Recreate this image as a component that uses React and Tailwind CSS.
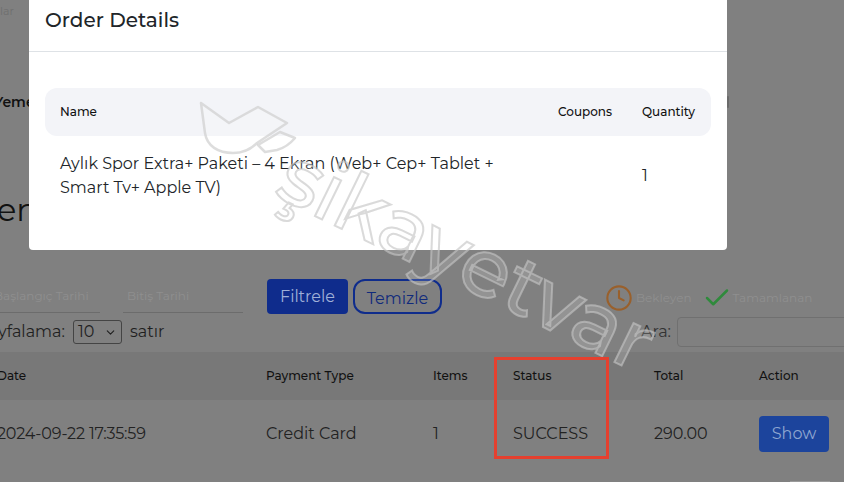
import { Check, Clock, ChevronDown } from 'lucide-react';

const font = "font-['Montserrat','Inter','Noto_Sans',sans-serif]";

const Background = () => (
  <div className="h-[482px] overflow-hidden bg-[#808080] text-[#1f1f1f]">
    <div className="h-[262px]">
      <div className="pt-[3px] text-[11px] text-[#6f6f6f]">lar</div>
      <div className="mt-[72px] flex items-center text-[14px] font-semibold text-[#111]">
        <span className="-ml-[6px] w-[733px]">Yeme</span>
        <span className="h-3 w-[2px] rounded-sm bg-[#6a6a6a]"></span>
      </div>
      <div className="mt-[79px] -ml-[3px] text-[32px] leading-9 text-[#111]">en</div>
    </div>
    <div className="flex h-[54px] items-start pt-[17px]">
      <div className="-ml-[6px] h-[34px] w-[106px] border-b border-[#6c6c6c] pt-[8px] text-[12px] text-[#8f8f8f]">Başlangıç Tarihi</div>
      <div className="ml-[23px] h-[34px] w-[120px] border-b border-[#6c6c6c] pt-[8px] pl-[4px] text-[12px] text-[#8f8f8f]">Bitiş Tarihi</div>
      <button className="ml-[24px] h-[35px] w-[81px] rounded bg-[#0f2c8c] text-[16px] text-[#9fb0d8]">Filtrele</button>
      <button className="ml-[5px] h-[35px] w-[89px] rounded-xl border-2 border-[#0f2c8c] pt-1 text-[16px] text-[#102a7c]">Temizle</button>
      <div className="mt-[4px] ml-[163px] flex items-center text-[12px] text-[#8f8f8f]">
        <Clock size={28} strokeWidth={1.8} className="text-[#99602c]" />
        <span className="ml-[3px]">Bekleyen</span>
        <Check size={30} strokeWidth={2} className="ml-[10px] text-[#2f8a3c]" />
        <span className="ml-[1px]">Tamamlanan</span>
      </div>
    </div>
    <div className="flex h-[36px] items-center">
      <span className="-ml-[21px] -mt-[4px] text-[16px]">Sayfalama:</span>
      <div className="ml-[8px] -mt-[4px] flex h-6 w-[49px] items-center justify-between rounded-[3px] border border-[#444] pl-1 pr-1 text-[16px]">
        10 <ChevronDown size={13} />
      </div>
      <span className="ml-2 -mt-[4px] text-[16px]">satır</span>
      <span className="ml-auto -mt-[4px] text-[16px] text-[#333]">Ara:</span>
      <div className="ml-[6px] -mr-4 -mt-[4px] h-[30px] w-[183px] rounded border border-[#707070]"></div>
    </div>
    <div className="flex h-[48px] items-center bg-[#787878] text-[12px] font-medium text-[#111]">
      <span className="-ml-[3px] w-[269px]">Date</span>
      <span className="w-[167px]">Payment Type</span>
      <span className="w-[80px]">Items</span>
      <span className="w-[141px]">Status</span>
      <span className="w-[105px]">Total</span>
      <span>Action</span>
    </div>
    <div className="flex h-[66px] items-center pt-[2px] text-[16px] text-[#222]">
      <span className="-ml-[3px] w-[269px] tracking-[-0.2px]">2024-09-22 17:35:59</span>
      <span className="w-[167px]">Credit Card</span>
      <span className="w-[80px]">1</span>
      <span className="w-[141px]">SUCCESS</span>
      <span className="w-[105px]">290.00</span>
      <button className="h-9 w-[70px] rounded bg-[#1c449c] text-[#8ea6d0]">Show</button>
    </div>
    <div className="mt-[15px] ml-[790px] w-[40px] border-t border-[#9a9a9a]"></div>
  </div>
);

const Modal = () => (
  <div className="absolute left-[29px] top-0 h-[250px] w-[698px] rounded-b bg-white text-[#212529]">
    <div className="flex h-[52px] items-center border-b border-[#dee2e6] pb-[12px] pl-4 text-[20px] font-medium">Order Details</div>
    <div className="mx-4 mt-9 flex h-[48px] items-center rounded-xl bg-[#f3f4f8] pl-[15px] text-[12px] font-medium text-[#111]">
      <span className="w-[498px]">Name</span>
      <span className="w-[84px]">Coupons</span>
      <span>Quantity</span>
    </div>
    <div className="mx-4 flex h-[78px] items-center pl-[15px] pt-[2px] text-[16px] leading-6">
      <span className="w-[582px] pr-[130px]">Aylık Spor Extra+ Paketi – 4 Ekran (Web+ Cep+ Tablet + Smart Tv+ Apple TV)</span>
      <span>1</span>
    </div>
  </div>
);

const Watermark = () => (
  <>
    <svg className="pointer-events-none absolute left-[198px] top-[100px]" width="100" height="60" viewBox="0 0 100 60" fill="#ffffff" fillOpacity="0.12" stroke="#cfcfcf" strokeOpacity="0.7" strokeWidth="2.5" strokeLinejoin="round">
      <path d="M3 3 L31 23 L60 7 L89 23 L59 43 C52 50 44 53 35 53 C20 53 9 46 7 33 Z" />
      <path d="M60 45 L82 32 L97 38 C92 44 86 48 79 50 L67 52 Z" />
    </svg>
    <div className="pointer-events-none absolute left-[285px] top-[128px] origin-left rotate-[26deg] text-[82px] font-medium leading-none tracking-[-1px] text-white/15 [-webkit-text-stroke:2px_#c4c4c4a0]">
      şikayetvar
    </div>
  </>
);

export default function App() {
  return (
    <div className={`relative h-[482px] w-[844px] overflow-hidden ${font}`}>
      <Background />
      <Modal />
      <Watermark />
      {/* kirmizi isaret kutusu */}
      <div className="absolute left-[494px] top-[357px] h-[102px] w-[115px] border-[3px] border-[#e5402f]"></div>
    </div>
  );
}
